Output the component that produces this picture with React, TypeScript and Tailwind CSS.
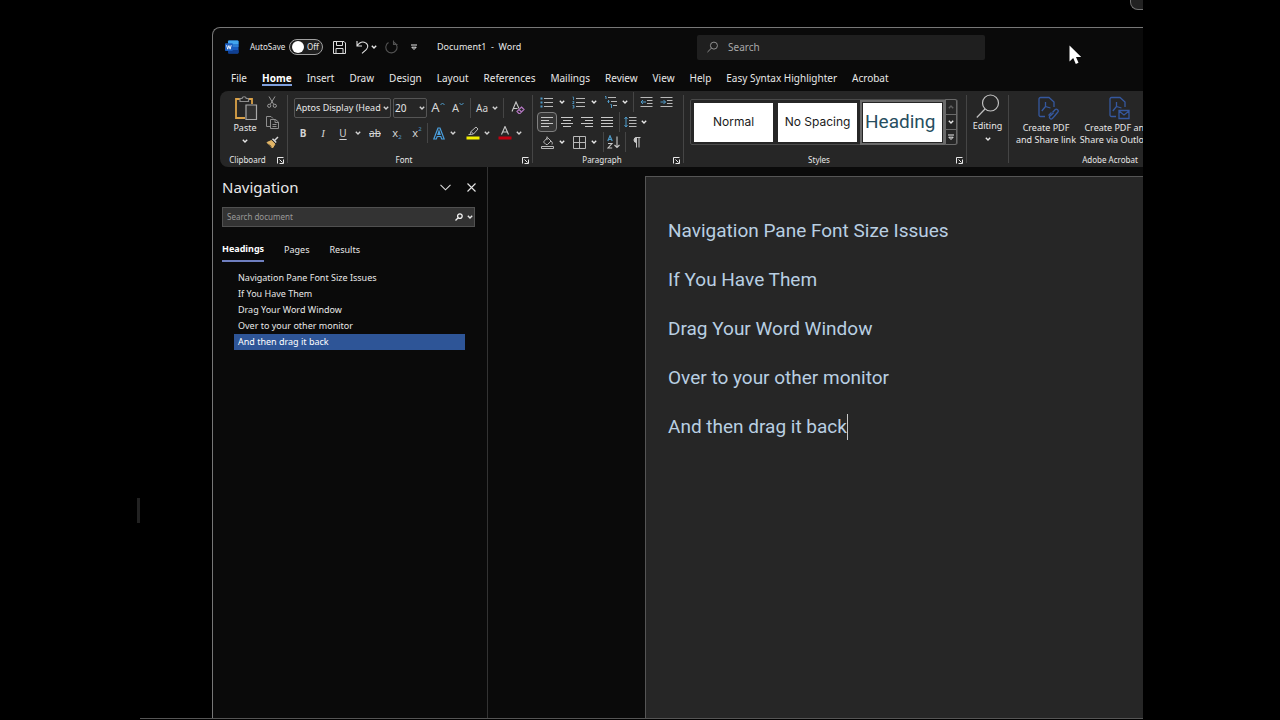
import type React from "react"

type Kids = { children?: React.ReactNode }

const tabs = [
  "File",
  "Home",
  "Insert",
  "Draw",
  "Design",
  "Layout",
  "References",
  "Mailings",
  "Review",
  "View",
  "Help",
  "Easy Syntax Highlighter",
  "Acrobat",
]

const headings = [
  "Navigation Pane Font Size Issues",
  "If You Have Them",
  "Drag Your Word Window",
  "Over to your other monitor",
  "And then drag it back",
]

const Chevron = ({ className = "" }: { className?: string }) => (
  <svg width="6" height="4" viewBox="0 0 6 4" fill="none" stroke="currentColor" strokeWidth="1.4" className={`shrink-0 ${className}`}>
    <path d="M0.8 0.7 3 2.9 5.2 0.7" />
  </svg>
)

const Sep = ({ className = "" }: { className?: string }) => <span className={`h-5 w-px shrink-0 bg-[#454545] ${className}`} />

const Tool = ({ label, className = "w-5", children }: Kids & { label: string; className?: string }) => (
  <button aria-label={label} className={`flex h-5 shrink-0 items-center justify-center ${className}`}>
    {children}
  </button>
)

const More = ({ label, className = "w-2" }: { label: string; className?: string }) => (
  <Tool label={label} className={className}>
    <Chevron />
  </Tool>
)

const Launcher = () => (
  <svg width="7" height="7" viewBox="0 0 7 7" fill="none" stroke="#e8e8e8" strokeWidth="1">
    <path d="M0.5 6.5V0.5H6.5M2.5 2.5 5.5 5.5M6.5 2.5V6.5H2.5" />
  </svg>
)

const Group = ({ name, launcher, className = "", children }: Kids & { name?: string; launcher?: boolean; className?: string }) => (
  <section aria-label={name} className={`flex shrink-0 ${className}`}>
    <div className="flex min-w-0 flex-1 flex-col">
      <div className="h-[62px]">{children}</div>
      <div className={`relative h-[14px] text-center text-[8px] leading-[14px] ${launcher ? "pr-3" : ""}`}>
        {name}
        {launcher && (
          <button aria-label={`${name} settings`} className="absolute top-1 right-[3px]">
            <Launcher />
          </button>
        )}
      </div>
    </div>
  </section>
)

const Divider = () => <div className="my-1 w-px shrink-0 bg-[#454545]" />

const WordLogo = () => (
  <svg width="14" height="14" viewBox="0 0 14 14">
    <rect x="3" y="0.5" width="10.5" height="13" rx="1" fill="#185abd" />
    <path d="M3 1.5a1 1 0 0 1 1-1h8.500a1 1 0 0 1 1 1V4H3z" fill="#41a5ee" />
    <path d="M3 4h10.500v3H3z" fill="#2b7cd3" />
    <path d="M3 10h10.500v2.500a1 1 0 0 1-1 1H4a1 1 0 0 1-1-1z" fill="#103f91" />
    <rect x="0" y="3.300" width="7.800" height="7.800" rx="0.800" fill="#1a5dbe" />
    <path d="M1.600 5.200 2.700 9.200 3.900 5.500 5.100 9.200 6.200 5.200" fill="none" stroke="#fff" strokeWidth="0.900" />
  </svg>
)

const Lines = ({ rows }: { rows: [number, number][] }) => (
  <svg width="12" height="12" viewBox="0 0 12 12" stroke="#c8c8c8">
    {rows.map(([x1, x2], i) => (
      <path key={i} d={`M${x1} ${1.5 + i * 3}H${x2}`} />
    ))}
  </svg>
)

const ListIcon = ({ kind }: { kind: "bullets" | "numbers" | "levels" }) => (
  <svg width="14" height="13" viewBox="0 0 14 13" fill="none">
    {kind === "levels" ? (
      <>
        <path d="M4 1.500H12M7 5.500H13M9 9.500H13" stroke="#b8b8b8" />
        <path d="M1 0.500H2V3M3.500 5.500H5.500M4.500 4V7M6.500 8.500H7.500V12" stroke="#4f9bc9" />
      </>
    ) : (
      <>
        <path d="M4 2.500H13M4 6.500H13M4 10.500H13" stroke="#b8b8b8" />
        {kind === "bullets" ? (
          <path d="M0.500 1.500h2v2h-2zM0.500 5.500h2v2h-2zM0.500 9.500h2v2h-2z" fill="#4f9bc9" />
        ) : (
          <path d="M0.500 1H1.500V4M0.500 5.500H2V6.500L0.500 7.500H2.200M0.500 9.500H2V12H0.500M1 10.800H2" stroke="#4f9bc9" strokeWidth="0.800" />
        )}
      </>
    )}
  </svg>
)

const IndentIcon = ({ back }: { back?: boolean }) => (
  <svg width="13" height="12" viewBox="0 0 13 12" fill="none">
    <path d="M0.500 1.500H12.500M7 4.500H12.500M7 7.500H12.500M0.500 10.500H12.500" stroke="#b8b8b8" />
    <path d={back ? "M6 6H1M3 4 1 6 3 8" : "M0.500 6H5.500M3.500 4 5.500 6 3.500 8"} stroke="#4f9bc9" />
  </svg>
)

const PdfIcon = ({ mail }: { mail?: boolean }) => (
  <svg width="22" height="24" viewBox="0 0 22 24" fill="none" stroke="#35589f" strokeWidth="1.300" className="ml-1">
    <path d="M8 20.500H3.500a1.500 1.500 0 0 1-1.500-1.500V3a1.500 1.500 0 0 1 1.500-1.500H12L17 6V11" />
    <path d="M8.500 6V10.500L4.800 15M8.500 10.500 13.500 12" />
    {mail ? (
      <path d="M11 14.500h10v8H11zM11 15l5 4 5-4" />
    ) : (
      <path d="M15.500 16.500 18 13.800a1.800 1.800 0 0 1 2.700 2.500L17.500 20M16.500 17 13 20a1.700 1.700 0 0 0 2.300 2.500L18.500 19M11.500 19.500 14.500 16.500" />
    )}
  </svg>
)

const TitleBar = () => (
  <header className="flex h-[38px] items-center text-[9px]">
    <div className="flex w-[484px] shrink-0 items-center pl-3">
      <WordLogo />
      <span className="ml-[11px] w-[39px] text-[8px]">AutoSave</span>
      <button
        role="switch"
        aria-checked="false"
        aria-label="AutoSave"
        className="flex h-4 w-[34px] items-center rounded-full border border-[#a0a0a0] bg-[#1f1f1f] pl-0.5 text-[8px]"
      >
        <span className="size-3 rounded-full bg-white" />
        <span className="ml-[3px]">Off</span>
      </button>
      <button aria-label="Save" className="ml-[10px]">
        <svg width="13" height="13" viewBox="0 0 13 13" fill="none" stroke="#dcdcdc">
          <path d="M0.500 0.500H11L12.500 2V12.500H0.500zM3.500 0.500V4.500H9.500V0.500M3 12.500V7.500H10V12.500" />
        </svg>
      </button>
      <button aria-label="Undo" className="ml-[10px]">
        <svg width="13" height="14" viewBox="0 0 13 14" fill="none" stroke="#e4e4e4" strokeWidth="1.100">
          <path d="M1 1V6H6M1.200 5.800C3 3 5.500 1.500 8.300 2.200 12 3.200 12.800 7 10.500 9.300L6 13.300" />
        </svg>
      </button>
      <More label="Undo history" className="ml-px w-2" />
      <button aria-label="Redo" disabled className="ml-[7px]">
        <svg width="13" height="14" viewBox="0 0 13 14" fill="none" stroke="#525252" strokeWidth="1.100">
          <path d="M8.500 0.500V4.500H12.500M9 2.300A5.600 5.600 0 1 1 3.500 2.500" />
        </svg>
      </button>
      <button aria-label="Customize Quick Access Toolbar" className="ml-[13px]">
        <svg width="6" height="7" viewBox="0 0 6 7" fill="none" stroke="#e4e4e4">
          <path d="M0 1H6M0.800 3.200 3 5.500 5.200 3.200z" />
        </svg>
      </button>
      <span className="ml-5 whitespace-pre">Document1  -  Word</span>
    </div>
    <label className="flex h-[25px] w-[288px] shrink-0 items-center rounded-xs bg-[#1f1f1f] pl-[10px]">
      <svg width="12" height="12" viewBox="0 0 12 12" fill="none" stroke="#9a9a9a">
        <circle cx="7.500" cy="4.500" r="3.800" />
        <path d="M4.800 7.200 0.500 11.500" />
      </svg>
      <input type="search" aria-label="Search" placeholder="Search" className="ml-[10px] w-full bg-transparent text-[10px] outline-none placeholder:text-[#a8a8a8]" />
    </label>
  </header>
)

const Tabs = () => (
  <nav className="flex h-[25px] gap-[15px] pl-[18px] text-[10px] leading-[24px]">
    {tabs.map((tab) => (
      <a
        key={tab}
        href="#"
        className={`h-5 shrink-0 whitespace-nowrap ${tab === "Home" ? "border-b-2 border-[#7f9fdc] font-bold text-white" : ""}`}
      >
        {tab}
      </a>
    ))}
  </nav>
)

const Clipboard = () => (
  <Group name="Clipboard" launcher className="w-[67px]">
    <div className="flex pt-1 pl-1">
      <button className="flex w-[42px] flex-col items-center text-[9px] leading-[14px]">
        <svg width="24" height="26" viewBox="0 0 24 26" fill="none" className="ml-0.5">
          <path d="M6 4H2V23H11M15 4H18V9" stroke="#dba248" strokeWidth="1.800" />
          <path d="M6 6.500V3.500H8a2.200 2.200 0 0 1 4.300 0H14.500V6.500z" stroke="#8e8e8e" strokeWidth="1.200" />
          <path d="M12 10H22.500V24.500H12z" fill="#303030" stroke="#a8a8a8" strokeWidth="1.200" />
        </svg>
        Paste
        <Chevron className="mt-1" />
      </button>
      <div className="-mt-[3px] flex flex-col items-center">
        <Tool label="Cut" className="w-3">
          <svg width="10" height="12" viewBox="0 0 10 12" fill="none" stroke="#9a9a9a">
            <path d="M2 0.500 6.800 8.500M8 0.500 3.200 8.500" />
            <circle cx="2.200" cy="9.800" r="1.600" />
            <circle cx="7.800" cy="9.800" r="1.600" />
          </svg>
        </Tool>
        <Tool label="Copy" className="w-3">
          <svg width="13" height="13" viewBox="0 0 13 13" fill="none" stroke="#8e8e8e" className="shrink-0">
            <path d="M4 10.500H0.500V0.500H5L7 2.500M4.500 3.500H9.500L12.500 6V12.500H4.500zM9 3.500V6.500H12.500M6.500 8.500H10.500M6.500 10.500H10.500" />
          </svg>
        </Tool>
        <Tool label="Format Painter" className="w-3">
          <svg width="13" height="13" viewBox="0 0 13 13" fill="none" className="shrink-0">
            <path d="M1 6.500 5.500 4.500 9 8 6.500 12z" fill="#e2b566" stroke="#e2b566" />
            <path d="M3 8.500 5 10.500" stroke="#262626" />
            <path d="M5.500 3.200 10 7.700" stroke="#262626" strokeWidth="1.200" />
            <path d="M6.500 2.800 10.200 6.500M8.500 4.500 12 1" stroke="#d8d8d8" strokeWidth="1.500" />
          </svg>
        </Tool>
      </div>
    </div>
  </Group>
)

const FontGroup = () => (
  <Group name="Font" launcher className="w-[244px]">
    <div className="flex flex-col gap-[5px] pt-[7px] pl-[5px] text-[#d4d4d4]">
      <div className="flex items-center">
        <div className="relative ml-px flex">
          <select aria-label="Font" className="h-5 w-[97px] appearance-none rounded-xs border border-[#555] bg-transparent pl-px text-[9px] text-[#e8e8e8]">
            <option>Aptos Display (Head</option>
          </select>
          <Chevron className="pointer-events-none absolute top-2 right-[2px]" />
        </div>
        <div className="relative ml-0.5 flex">
          <select aria-label="Font size" className="h-5 w-[34px] appearance-none rounded-xs border border-[#555] bg-transparent pl-px text-[10px] text-[#e8e8e8]">
            <option>20</option>
          </select>
          <Chevron className="pointer-events-none absolute top-2 right-[2px]" />
        </div>
        <Tool label="Increase font size" className="ml-px w-5 text-[13px]">
          A<svg width="5" height="4" viewBox="0 0 5 4" fill="none" stroke="#4f9bc9" className="-mt-2"><path d="M0.500 3 2.500 1 4.500 3" /></svg>
        </Tool>
        <Tool label="Decrease font size" className="w-5 text-[11px]">
          A<svg width="5" height="4" viewBox="0 0 5 4" fill="none" stroke="#4f9bc9" className="-mt-2"><path d="M0.500 1 2.500 3 4.500 1" /></svg>
        </Tool>
        <Sep className="mx-0.5" />
        <Tool label="Change case" className="w-[18px] text-[10px]">Aa</Tool>
        <More label="Change case options" />
        <Sep className="mx-1" />
        <Tool label="Clear formatting" className="w-5">
          <svg width="14" height="14" viewBox="0 0 14 14" fill="none">
            <path d="M1 10.500 5 1 8 7.500M2.500 7.500H6.500" stroke="#c8c8c8" strokeWidth="1.100" />
            <path d="M10.500 6 13 8.500 9 12.500H7.800L6 10.500zM8 8.500 10.500 11" stroke="#b678c4" strokeWidth="1.200" />
          </svg>
        </Tool>
      </div>
      <div className="flex items-center text-[11px]">
        <Tool label="Bold" className="w-5 text-[10px] font-bold">B</Tool>
        <Tool label="Italic" className="w-5 font-['Liberation_Serif',serif] italic">I</Tool>
        <Tool label="Underline" className="w-5 text-[10px] underline underline-offset-2">U</Tool>
        <More label="Underline styles" className="w-[10px]" />
        <Tool label="Strikethrough" className="w-6 text-[10px] line-through">ab</Tool>
        <Tool label="Subscript" className="w-5">
          x<span className="mt-2 text-[6px] text-[#4f9bc9]">2</span>
        </Tool>
        <Tool label="Superscript" className="w-5">
          x<span className="-mt-2 text-[6px] text-[#4f9bc9]">2</span>
        </Tool>
        <Sep className="mr-px" />
        <Tool label="Text effects" className="w-5">
          <svg width="12" height="13" viewBox="0 0 12 13" fill="none" stroke="#4aa0e0" strokeWidth="1.200">
            <path d="M0.800 12 5 1H7L11.200 12H8.700L7.800 9.500H4.200L3.300 12zM4.900 7.500H7.100L6 4z" />
          </svg>
        </Tool>
        <More label="Text effects options" />
        <Tool label="Text highlight color" className="ml-[6px] w-5">
          <svg width="14" height="14" viewBox="0 0 14 14" fill="none">
            <path d="M4 8.500 5 5.500 10 1 12 3 7.500 8zM5 5.500 7.500 8M4 8.500H2.500" stroke="#b8b8b8" />
            <path d="M0.500 10.500H13.500V13.500H0.500z" fill="#f4f000" />
          </svg>
        </Tool>
        <More label="Highlight colors" />
        <Tool label="Font color" className="ml-1 w-5">
          <svg width="14" height="14" viewBox="0 0 14 14" fill="none">
            <path d="M3.500 8.500 7 0.500 10.500 8.500M4.800 6H9.200" stroke="#c8c8c8" strokeWidth="1.100" />
            <path d="M0.500 10.500H13.500V13.500H0.500z" fill="#c00010" />
          </svg>
        </Tool>
        <More label="Font colors" />
      </div>
    </div>
  </Group>
)

const Paragraph = () => (
  <Group name="Paragraph" launcher className="w-[150px]">
    <div className="flex flex-col pt-px pl-1">
      <div className="flex items-center">
        <Tool label="Bullets"><ListIcon kind="bullets" /></Tool>
        <More label="Bullet library" className="w-[10px]" />
        <Tool label="Numbering" className="ml-0.5 w-5"><ListIcon kind="numbers" /></Tool>
        <More label="Numbering library" className="w-[10px]" />
        <Tool label="Multilevel list" className="ml-0.5 w-5"><ListIcon kind="levels" /></Tool>
        <More label="List library" />
        <Sep className="ml-1 mr-0.5 h-4" />
        <Tool label="Decrease indent"><IndentIcon back /></Tool>
        <Tool label="Increase indent"><IndentIcon /></Tool>
      </div>
      <div className="flex items-center">
        <Tool label="Align left" className="w-5 rounded-sm border border-[#808080] bg-[#363636]">
          <Lines rows={[[0, 12], [0, 8], [0, 12], [0, 8]]} />
        </Tool>
        <Tool label="Center"><Lines rows={[[0, 12], [2, 10], [0, 12], [2, 10]]} /></Tool>
        <Tool label="Align right"><Lines rows={[[0, 12], [4, 12], [0, 12], [4, 12]]} /></Tool>
        <Tool label="Justify"><Lines rows={[[0, 12], [0, 12], [0, 12], [0, 12]]} /></Tool>
        <Sep className="mx-0.5 h-4" />
        <Tool label="Line spacing" className="w-4">
          <svg width="13" height="12" viewBox="0 0 13 12" fill="none">
            <path d="M5 1.500H12.500M5 4.500H12.500M5 7.500H12.500M5 10.500H12.500" stroke="#b8b8b8" />
            <path d="M2 1V11M0.500 3 2 1 3.500 3M0.500 9 2 11 3.500 9" stroke="#4f9bc9" />
          </svg>
        </Tool>
        <More label="Line spacing options" className="w-3" />
      </div>
      <div className="flex items-center">
        <Tool label="Shading">
          <svg width="13" height="13" viewBox="0 0 13 13" fill="none" stroke="#b8b8b8">
            <path d="M2.500 6 6.500 1.500 10 5 6.500 8.500H5zM6 0.500V4M10 5C11.500 6 11.500 7.500 11 8.500" />
            <path d="M0.500 10.500H12.500V12.500H0.500z" />
          </svg>
        </Tool>
        <More label="Shading colors" className="w-[10px]" />
        <Tool label="Borders" className="ml-0.5 w-5">
          <svg width="13" height="13" viewBox="0 0 13 13" fill="none" stroke="#b8b8b8">
            <path d="M0.500 0.500H12.500V12.500H0.500zM6.500 0.500V12.500M0.500 6.500H12.500" />
          </svg>
        </Tool>
        <More label="Border styles" className="w-[10px]" />
        <Sep className="ml-1 mr-px h-4" />
        <Tool label="Sort" className="w-4">
          <svg width="13" height="14" viewBox="0 0 13 14" fill="none">
            <path d="M0.800 6 3 0.800 5.200 6M1.500 4.500H4.500" stroke="#4f9bc9" strokeWidth="1.200" />
            <path d="M1 8.500H5L1 13H5.200M10 1.500V12.500M7.500 10 10 12.500 12.500 10" stroke="#c8c8c8" strokeWidth="1.100" />
          </svg>
        </Tool>
        <Sep className="ml-1 h-4" />
        <Tool label="Show formatting marks" className="w-5">
          <svg width="9" height="11" viewBox="0 0 9 11" fill="none" stroke="#c8c8c8">
            <path d="M8.500 0.500H3.500M4.500 0.500V10.500M7 0.500V10.500" />
            <path d="M4.500 0.500A2.400 2.400 0 0 0 4.500 5.500z" fill="#c8c8c8" />
          </svg>
        </Tool>
      </div>
    </div>
  </Group>
)

const Styles = () => (
  <Group name="Styles" launcher className="w-[282px]">
    <div className="pt-2 pl-[6px] font-['Inter',sans-serif]">
      <div className="flex h-[46px] w-[268px] rounded-xs border border-[#4a4a4a]">
        <div className="flex flex-1 items-center pl-[3px]">
          <button className="mr-[5px] h-[39px] w-[79px] bg-white text-[12px] text-[#1a1a1a]">Normal</button>
          <button className="mr-[3px] h-[39px] w-[79px] bg-white text-[12px] whitespace-nowrap text-[#1a1a1a]">No Spacing</button>
          <button className="h-[45px] w-[85px] border-2 border-[#6a6a6a] bg-[#262626] p-px">
            <span className="flex h-[39px] items-center overflow-hidden bg-white pl-0.5 font-['Roboto',sans-serif] text-[19px] text-[#274e60]">Heading</span>
          </button>
        </div>
        <div className="-my-px flex w-3 flex-col divide-y divide-[#6a6a6a] rounded-r-xs border border-[#6a6a6a] text-[#e8e8e8]">
          <button aria-label="Previous styles" className="flex flex-1 items-center justify-center text-[#606060]">
            <Chevron className="rotate-180" />
          </button>
          <button aria-label="Next styles" className="flex flex-1 items-center justify-center">
            <Chevron />
          </button>
          <button aria-label="More styles" className="flex flex-1 items-center justify-center">
            <svg width="6" height="7" viewBox="0 0 6 7" fill="none" stroke="currentColor">
              <path d="M0 1H6M0.800 3.200 3 5.500 5.200 3.200z" />
            </svg>
          </button>
        </div>
      </div>
    </div>
  </Group>
)

const Ribbon = () => (
  <div className="ml-[7px] flex h-[76px] overflow-hidden rounded-l-lg bg-[#262626]">
    <Clipboard />
    <Divider />
    <FontGroup />
    <Divider />
    <Paragraph />
    <Divider />
    <Styles />
    <Divider />
    <Group className="w-[41px]">
      <button className="flex w-full flex-col items-center pt-[3px] text-[9px] leading-[14px]">
        <svg width="24" height="25" viewBox="0 0 24 25" fill="none" stroke="#c0c0c0" strokeWidth="1.200">
          <circle cx="14.500" cy="9" r="8" />
          <path d="M9 15 0.800 23.500" />
        </svg>
        Editing
        <Chevron className="mt-1" />
      </button>
    </Group>
    <Divider />
    <Group name="Adobe Acrobat" className="w-[202px]">
      <div className="flex pt-[5px] pl-[5px] text-[9px] leading-[12px]">
        <button className="flex w-16 flex-col items-center whitespace-nowrap">
          <PdfIcon />
          <span className="mt-0.5">Create PDF</span>
          <span>and Share link</span>
        </button>
        <button className="flex w-[78px] flex-col items-center whitespace-nowrap">
          <PdfIcon mail />
          <span className="mt-0.5">Create PDF and</span>
          <span>Share via Outlook</span>
        </button>
      </div>
    </Group>
  </div>
)

const NavigationPane = () => (
  <aside className="w-[275px] shrink-0 border-r border-[#333] pt-2 pl-[9px]">
    <div className="flex h-6 items-center pr-[11px]">
      <h2 className="flex-1 text-[15px] leading-6">Navigation</h2>
      <button aria-label="Pane options" className="mr-4">
        <svg width="11" height="7" viewBox="0 0 11 7" fill="none" stroke="#dcdcdc" strokeWidth="1.100">
          <path d="M0.500 0.800 5.500 5.800 10.500 0.800" />
        </svg>
      </button>
      <button aria-label="Close pane">
        <svg width="9" height="9" viewBox="0 0 9 9" fill="none" stroke="#e4e4e4" strokeWidth="1.100">
          <path d="M0.500 0.500 8.500 8.500M8.500 0.500 0.500 8.500" />
        </svg>
      </button>
    </div>
    <label className="mt-2 mr-3 flex h-5 items-center border border-[#505050] bg-[#333] pr-px pl-1">
      <input aria-label="Search document" placeholder="Search document" className="w-full bg-transparent text-[8px] outline-none placeholder:text-[#9a9a9a]" />
      <svg width="8" height="8" viewBox="0 0 8 8" fill="none" stroke="#f0f0f0" strokeWidth="1.300" className="mr-1 shrink-0">
        <circle cx="4.900" cy="3.100" r="2.300" />
        <path d="M3.200 4.800 0.500 7.500" />
      </svg>
      <Chevron />
    </label>
    <div role="tablist" className="mt-[14px] flex gap-5 text-[9px] leading-4">
      <button role="tab" aria-selected="true" className="h-[21px] border-b-2 border-[#6f7fc0] pb-1 font-bold text-white">
        Headings
      </button>
      <button role="tab" aria-selected="false" className="h-[21px] pb-1">Pages</button>
      <button role="tab" aria-selected="false" className="h-[21px] pb-1">Results</button>
    </div>
    <ul className="mt-2 mr-[22px] ml-3 text-[9px] leading-4">
      {headings.map((text, i) => (
        <li key={text}>
          <a href="#" className={`block pl-1 ${i === headings.length - 1 ? "bg-[#2e5597] text-white" : ""}`}>
            {text}
          </a>
        </li>
      ))}
    </ul>
  </aside>
)

const Page = () => (
  <main className="mt-[9px] ml-[157px] flex-1 border-t border-l border-[#555] bg-[#262626] pt-[29px] pl-[22px] font-['Roboto',sans-serif] text-[19px] leading-[49px] whitespace-nowrap text-[#b9cfe2]">
    {headings.map((text, i) => (
      <p key={text} className="flex items-center">
        {text}
        {i === headings.length - 1 && <span className="h-[26px] w-px bg-[#c8c8c8]" />}
      </p>
    ))}
  </main>
)

export default function App() {
  return (
    <div className="flex h-screen overflow-hidden bg-black font-['Noto_Sans',sans-serif] text-[#e8e8e8]">
      <div className="flex w-[212px] shrink-0 flex-col justify-between pt-[498px] pl-[137px]">
        <span className="h-[25px] w-[3px] bg-[#222]" />
        <span className="mb-px ml-[3px] h-px bg-[#555]" />
      </div>
      <div className="relative flex min-w-0 flex-1 flex-col overflow-hidden">
        <div className="flex h-[27px] shrink-0 justify-end">
          <span className="h-[10px] w-[13px] rounded-bl-lg border-b border-l border-[#707070] bg-[#222]" />
        </div>
        <div className="flex flex-1 flex-col overflow-hidden rounded-tl-lg border-t border-l border-[#777] bg-[#0a0a0a]">
          <TitleBar />
          <Tabs />
          <Ribbon />
          <div className="flex flex-1">
            <NavigationPane />
            <Page />
          </div>
        </div>
        <div className="mb-px h-px shrink-0 bg-[#555]" />
        <svg width="13" height="20" viewBox="0 0 13 20" className="absolute top-[45px] left-[857px]">
          <path d="M0.500 0.500V16.500L4.200 13 6.800 19 9.500 17.800 7 12H12.200z" fill="#fff" />
        </svg>
      </div>
      <div className="w-[137px] shrink-0" />
    </div>
  )
}
